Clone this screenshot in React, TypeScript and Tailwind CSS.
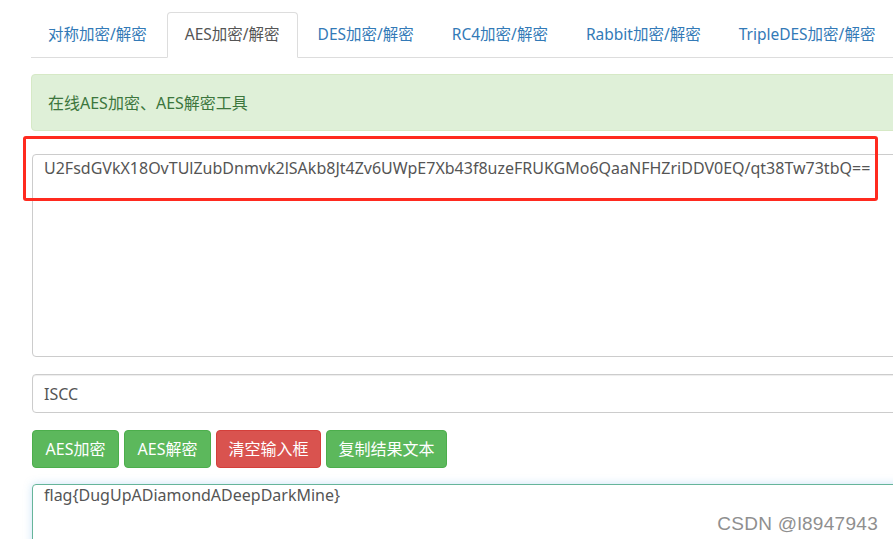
import React from "react";

const tabs = ["对称加密/解密", "AES加密/解密", "DES加密/解密", "RC4加密/解密", "Rabbit加密/解密", "TripleDES加密/解密"];

export default function App() {
  return (
    <div className="relative w-[893px] h-[539px] overflow-hidden bg-white font-['Noto_Sans','Noto_Sans_CJK_SC',sans-serif]">
      <div className="w-[1000px] pl-[31px] pt-[12px]">
        <ul className="flex border-b border-[#ddd] h-[46px]">
          {tabs.map((t, i) => (
            <li key={t} className="mr-[2px] -mb-px">
              {i === 1 ? (
                <div className="h-[46px] px-[17px] flex items-center text-[15.5px] text-[#555] bg-white border border-[#ddd] border-b-transparent rounded-t-[4px]">
                  {t}
                </div>
              ) : i === 0 ? (
                <div className="h-[46px] pl-[16px] pr-[17px] flex items-center text-[15.5px] text-[#337ab7] border border-transparent">
                  {t}
                </div>
              ) : (
                <div className="h-[46px] px-[17px] flex items-center text-[15.5px] text-[#337ab7] border border-transparent">
                  {t}
                </div>
              )}
            </li>
          ))}
        </ul>
        <div className="mt-[16px] h-[57px] flex items-center px-[16px] bg-[#dff0d8] border border-[#d6e9c6] rounded-[4px] text-[16px] text-[#3c763d]">
          在线AES加密、AES解密工具
        </div>
        <div className="mt-[23px] ml-[1px] h-[203px] border border-[#ccc] rounded-[4px] px-[11px] pt-[1px] text-[16px] text-[#555] leading-[24px] whitespace-nowrap">
          U2FsdGVkX18OvTUlZubDnmvk2lSAkb8Jt4Zv6UWpE7Xb43f8uzeFRUKGMo6QaaNFHZriDDV0EQ/qt38Tw73tbQ==
        </div>
        <div className="mt-[17px] ml-[1px] h-[39px] border border-[#ccc] rounded-[4px] px-[11px] flex items-center text-[16px] text-[#555] shadow-[inset_0_1px_1px_rgba(0,0,0,0.075)]">
          ISCC
        </div>
        <div className="mt-[17px] ml-[1px] flex gap-[5px]">
          <button className="h-[38px] w-[87px] rounded-[4px] bg-[#5cb85c] border border-[#4cae4c] text-white text-[16px]">AES加密</button>
          <button className="h-[38px] w-[87px] rounded-[4px] bg-[#5cb85c] border border-[#4cae4c] text-white text-[16px]">AES解密</button>
          <button className="h-[38px] w-[105px] rounded-[4px] bg-[#d9534f] border border-[#d43f3a] text-white text-[16px]">清空输入框</button>
          <button className="h-[38px] w-[121px] rounded-[4px] bg-[#5cb85c] border border-[#4cae4c] text-white text-[16px]">复制结果文本</button>
        </div>
        <div className="mt-[16px] ml-[1px] h-[120px] border border-[#66b59a] rounded-[4px] px-[11px] text-[16px] text-[#555] leading-[20px] shadow-[0_0_8px_rgba(102,175,233,0.35)]">
          flag{"{"}DugUpADiamondADeepDarkMine{"}"}
        </div>
      </div>
      <div className="absolute left-[23px] top-[136px] w-[855px] h-[65px] border-[3px] border-[#ff2a1f] rounded-[3px]" />
      <div className="absolute right-[15px] top-[510px] text-[19px] tracking-[0.3px] text-[#8f8f8f] font-['Liberation_Sans',Arial,sans-serif] [text-shadow:0_0_2px_#fff,1px_1px_1px_#fff]">
        CSDN @l8947943
      </div>
    </div>
  );
}
